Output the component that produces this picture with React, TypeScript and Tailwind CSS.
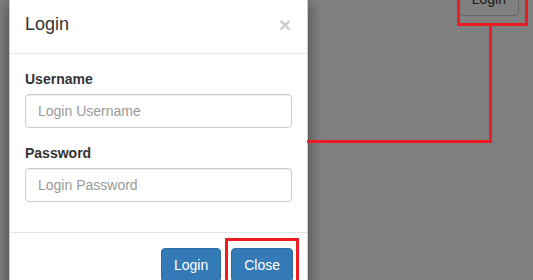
import React from "react";

export default function App() {
  return (
    <div
      className="relative w-[533px] h-[280px] overflow-hidden bg-[#808080] text-[#333] text-[14px] leading-[20px]"
      style={{ fontFamily: '"Liberation Sans", Arial, Helvetica, sans-serif' }}
    >
      {/* page content behind the overlay */}
      <div className="flex justify-end pr-[14px] -mt-[18px]">
        <button className="h-[34px] px-[12px] border border-[#666] rounded-[4px] bg-[#808080] text-[#1a1a1a] text-[14px]">
          Login
        </button>
      </div>

      {/* modal */}
      <div className="absolute left-[9px] top-[-4px] w-[299px] bg-white border border-black/20 rounded-[6px] shadow-[0_5px_15px_rgba(0,0,0,0.5)]">
        <div className="flex items-start justify-between px-[15px] pt-[15px] pb-[15px] border-b border-[#e5e5e5]">
          <h4 className="text-[18px] leading-[25.7px] text-[#333]">Login</h4>
          <button className="text-[21px] leading-[21px] font-bold text-[#cccccc] mt-[2px] mr-[1px]">×</button>
        </div>
        <div className="px-[15px] pt-[15px] pb-[15px] flex flex-col gap-[15px]">
          <div className="flex flex-col gap-[5px]">
            <label className="font-bold text-[14px] leading-[20px]">Username</label>
            <input
              className="h-[34px] w-full px-[12px] border border-[#ccc] rounded-[4px] shadow-[inset_0_1px_1px_rgba(0,0,0,0.075)] placeholder:text-[#999] outline-none text-[14px]"
              placeholder="Login Username"
            />
          </div>
          <div className="flex flex-col gap-[5px] mb-[15px]">
            <label className="font-bold text-[14px] leading-[20px]">Password</label>
            <input
              className="h-[34px] w-full px-[12px] border border-[#ccc] rounded-[4px] shadow-[inset_0_1px_1px_rgba(0,0,0,0.075)] placeholder:text-[#999] outline-none text-[14px]"
              placeholder="Login Password"
            />
          </div>
        </div>
        <div className="flex justify-end gap-[10px] px-[14px] pt-[15px] pb-[15px] border-t border-[#e5e5e5]">
          <button className="h-[34px] px-[12px] bg-[#337ab7] border border-[#2e6da4] rounded-[4px] text-white text-[14px]">
            Login
          </button>
          <button className="h-[34px] px-[12px] bg-[#337ab7] border border-[#2e6da4] rounded-[4px] text-white text-[14px]">
            Close
          </button>
        </div>
      </div>

      {/* annotations */}
      <svg className="absolute left-0 top-0 pointer-events-none" width="533" height="280" viewBox="0 0 533 280">
        <rect x="458.5" y="-10" width="68" height="34.5" fill="none" stroke="#ed1c24" strokeWidth="3" />
        <polyline points="307,141.5 490.5,141.5 490.5,25" fill="none" stroke="#ed1c24" strokeWidth="3" />
        <rect x="226.5" y="239.5" width="71" height="60" fill="none" stroke="#ed1c24" strokeWidth="3" />
      </svg>
    </div>
  );
}
